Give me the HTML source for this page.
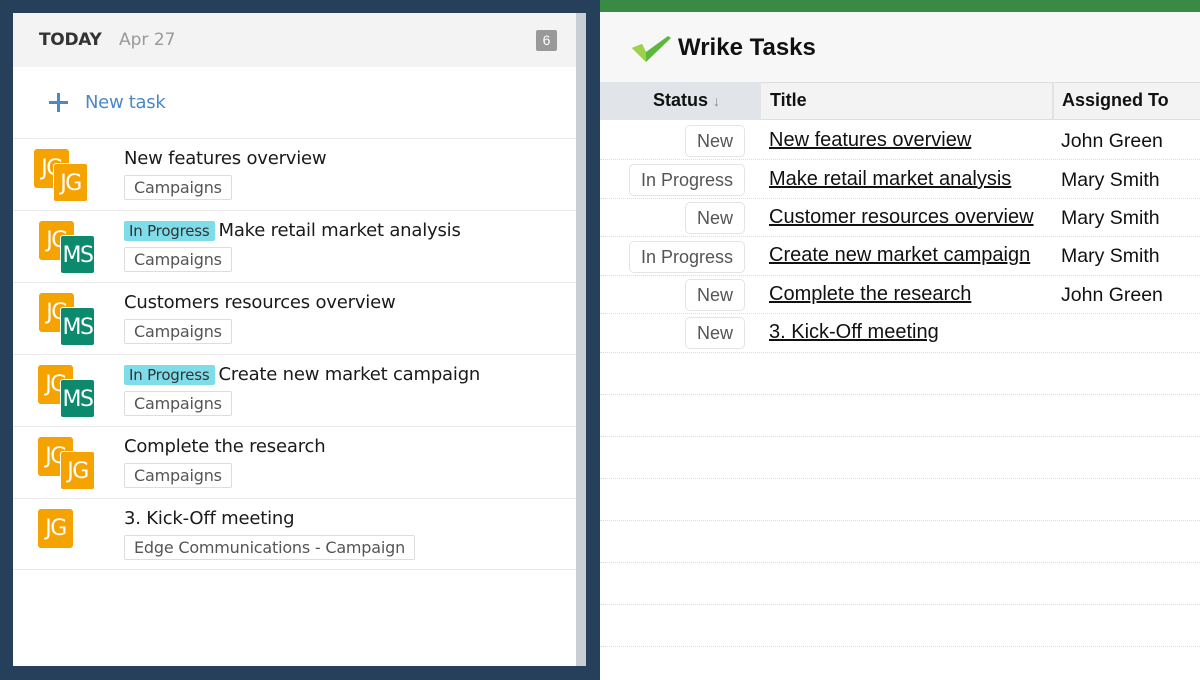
<!DOCTYPE html>
<html><head><style>
*{margin:0;padding:0;box-sizing:border-box}
body{width:1200px;height:680px;overflow:hidden;position:relative;font-family:"Liberation Sans",sans-serif;background:#fff}
.a{position:absolute}
#left{left:0;top:0;width:600px;height:680px;background:#263f5a}
#card{left:13px;top:13px;width:563px;height:653px;background:#fff}
#sb{left:576px;top:13px;width:10px;height:653px;background:#c9cdd4}
.hdr{left:0;top:0;width:563px;height:54px;background:#f3f3f3}
.row{left:0;width:563px;height:72px;border-top:1px solid #e8e8e8}
.av{position:absolute;width:35px;height:39px;border-radius:3px;color:#fff;font-size:22px;line-height:39px;text-align:center;font-family:"DejaVu Sans",sans-serif;letter-spacing:-1.5px;overflow:hidden}
.o{background:#f5a300}
.g{background:#0b8a6e;border:1px solid #fff}
.o2{border:1px solid #fff}
.t{position:absolute;left:111px;top:9px;font-size:18px;color:#1a1a1a;font-family:"DejaVu Sans",sans-serif;letter-spacing:-0.2px}
.tag{position:absolute;left:111px;top:36px;height:25px;border:1px solid #ddd;border-radius:2px;padding:0 9px;font-size:16px;line-height:23px;color:#555;font-family:"DejaVu Sans",sans-serif;letter-spacing:-0.2px}
.ip{background:#7fdde9;color:#333;font-size:15px;padding:1px 5px;border-radius:2px;margin-right:4px}
.rr{left:600px;width:600px;border-bottom:1px dotted #ddd}
.pill{position:absolute;right:455px;height:32px;border:1px solid #e4e4e4;border-radius:5px;padding:0 11px;font-size:18px;line-height:30px;color:#555}
.tt{position:absolute;left:169px;font-size:20px;color:#111;text-decoration:underline}
.as{position:absolute;left:461px;font-size:19.5px;color:#111}
</style></head><body>
<div id="left" class="a"></div>
<div id="card" class="a">
 <div class="a hdr">
  <span class="a" style="left:26px;top:17px;font-size:17px;font-weight:bold;color:#333;font-family:'DejaVu Sans',sans-serif;letter-spacing:-0.3px">TODAY</span>
  <span class="a" style="left:106px;top:17px;font-size:17px;color:#999;font-family:'DejaVu Sans',sans-serif">Apr 27</span>
  <span class="a" style="left:523px;top:17px;width:21px;height:21px;background:#999;color:#fff;font-size:14px;line-height:21px;text-align:center;border-radius:2px">6</span>
 </div>
 <svg class="a" style="left:36px;top:80px" width="19" height="19"><path d="M8 0h3v8h8v3h-8v8h-3v-8h-8v-3h8z" fill="#4a88c7"/></svg>
 <span class="a" style="left:72px;top:79px;font-size:18px;color:#4a88c7;font-family:'DejaVu Sans',sans-serif;letter-spacing:-0.3px">New task</span>

 <div class="a row" style="top:125px"><div class="av o" style="left:21px;top:10px">JG</div><div class="av o o2" style="left:40px;top:24px">JG</div><div class="t">New features overview</div><div class="tag">Campaigns</div></div>
 <div class="a row" style="top:197px"><div class="av o" style="left:26px;top:10px">JG</div><div class="av g" style="left:47px;top:24px">MS</div><div class="t"><span class="ip">In Progress</span>Make retail market analysis</div><div class="tag">Campaigns</div></div>
 <div class="a row" style="top:269px"><div class="av o" style="left:26px;top:10px">JG</div><div class="av g" style="left:47px;top:24px">MS</div><div class="t">Customers resources overview</div><div class="tag">Campaigns</div></div>
 <div class="a row" style="top:341px"><div class="av o" style="left:25px;top:10px">JG</div><div class="av g" style="left:47px;top:24px">MS</div><div class="t"><span class="ip">In Progress</span>Create new market campaign</div><div class="tag">Campaigns</div></div>
 <div class="a row" style="top:413px"><div class="av o" style="left:25px;top:10px">JG</div><div class="av o o2" style="left:47px;top:24px">JG</div><div class="t">Complete the research</div><div class="tag">Campaigns</div></div>
 <div class="a row" style="top:485px;border-bottom:1px solid #e8e8e8"><div class="av o" style="left:25px;top:10px">JG</div><div class="t">3. Kick-Off meeting</div><div class="tag">Edge Communications - Campaign</div></div>
</div>
<div id="sb" class="a"></div>

<div class="a" style="left:600px;top:0;width:600px;height:12px;background:#388a45"></div>
<div class="a" style="left:600px;top:12px;width:600px;height:70px;background:#f7f7f7"></div>
<svg class="a" style="left:630px;top:34px" width="42" height="30" viewBox="0 0 42 30"><path d="M2 14 L12 10 L16 18 L38 2 L41 4 L16 28 Z" fill="#5cb83a"/><path d="M2 14 L12 10 L16 18 L16 28 Z" fill="#9ed04a"/></svg>
<span class="a" style="left:678px;top:34px;font-size:24px;font-weight:bold;color:#111">Wrike Tasks</span>
<div class="a" style="left:600px;top:82px;width:600px;height:38px;background:#f3f3f3;border-top:1px solid #ddd;border-bottom:1px solid #ddd"></div>
<div class="a" style="left:600px;top:82px;width:161px;height:38px;background:#e1e4e8"></div>
<div class="a" style="left:1052px;top:82px;width:2px;height:38px;background:#e2e2e2"></div>
<span class="a" style="left:653px;top:90px;font-size:18px;font-weight:bold;color:#111">Status <span style="color:#888;font-weight:normal;font-size:14px">↓</span></span>
<span class="a" style="left:770px;top:90px;font-size:18px;font-weight:bold;color:#111">Title</span>
<span class="a" style="left:1062px;top:90px;font-size:18px;font-weight:bold;color:#111">Assigned To</span>

<div class="a rr" style="top:120px;height:40px"><div class="pill" style="top:5px">New</div><div class="tt" style="top:9px">New features overview</div><div class="as" style="top:10px">John Green</div></div>
<div class="a rr" style="top:160px;height:39px"><div class="pill" style="top:4px">In Progress</div><div class="tt" style="top:8px">Make retail market analysis</div><div class="as" style="top:9px">Mary Smith</div></div>
<div class="a rr" style="top:199px;height:38px"><div class="pill" style="top:3px">New</div><div class="tt" style="top:7px">Customer resources overview</div><div class="as" style="top:8px">Mary Smith</div></div>
<div class="a rr" style="top:237px;height:39px"><div class="pill" style="top:4px">In Progress</div><div class="tt" style="top:7px">Create new market campaign</div><div class="as" style="top:8px">Mary Smith</div></div>
<div class="a rr" style="top:276px;height:38px"><div class="pill" style="top:3px">New</div><div class="tt" style="top:7px">Complete the research</div><div class="as" style="top:8px">John Green</div></div>
<div class="a rr" style="top:314px;height:39px"><div class="pill" style="top:3px">New</div><div class="tt" style="top:7px">3. Kick-Off meeting</div></div>
<div class="a rr" style="top:353px;height:42px"></div>
<div class="a rr" style="top:395px;height:42px"></div>
<div class="a rr" style="top:437px;height:42px"></div>
<div class="a rr" style="top:479px;height:42px"></div>
<div class="a rr" style="top:521px;height:42px"></div>
<div class="a rr" style="top:563px;height:42px"></div>
<div class="a rr" style="top:605px;height:42px"></div>
</body></html>
